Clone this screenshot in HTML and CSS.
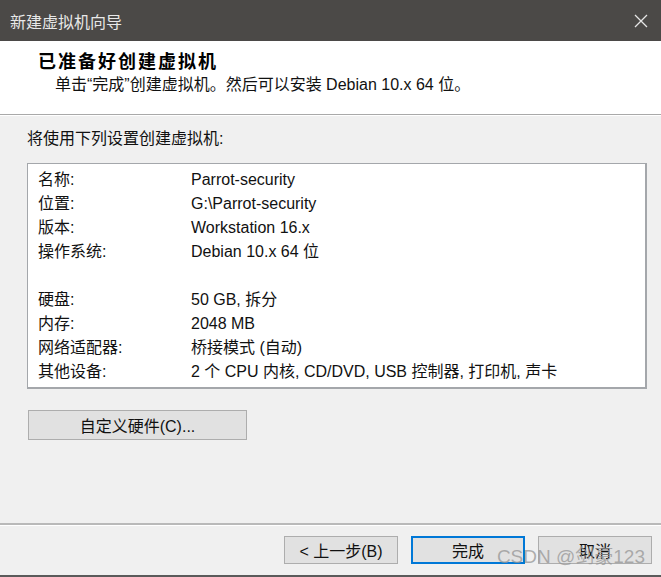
FILE: index.html
```html
<!DOCTYPE html>
<html lang="zh-CN">
<head>
    <meta charset="UTF-8">
    <meta name="viewport" content="width=device-width, initial-scale=1.0">
    <title>新建虚拟机向导</title>
    <link rel="stylesheet" href="styles.css">
</head>
<body>
    <div class="window">
        <div class="titlebar">
            <span class="title">新建虚拟机向导</span>
            <svg class="close" width="14" height="14" viewBox="0 0 14 14">
                <path d="M1 1 L13 13 M13 1 L1 13" stroke="#e6e6e6" stroke-width="1.3" fill="none"/>
            </svg>
        </div>

        <div class="header">
            <div class="header-title">已准备好创建虚拟机</div>
            <div class="header-sub">单击“完成”创建虚拟机。然后可以安装 Debian 10.x 64 位。</div>
        </div>

        <div class="content">
            <div class="intro">将使用下列设置创建虚拟机:</div>
            <div class="summary">
                <div class="row"><span class="key">名称:</span><span class="val">Parrot-security</span></div>
                <div class="row"><span class="key">位置:</span><span class="val">G:\Parrot-security</span></div>
                <div class="row"><span class="key">版本:</span><span class="val">Workstation 16.x</span></div>
                <div class="row"><span class="key">操作系统:</span><span class="val">Debian 10.x 64 位</span></div>
                <div class="row"></div>
                <div class="row"><span class="key">硬盘:</span><span class="val">50 GB, 拆分</span></div>
                <div class="row"><span class="key">内存:</span><span class="val">2048 MB</span></div>
                <div class="row"><span class="key">网络适配器:</span><span class="val">桥接模式 (自动)</span></div>
                <div class="row"><span class="key">其他设备:</span><span class="val">2 个 CPU 内核, CD/DVD, USB 控制器, 打印机, 声卡</span></div>
            </div>
            <button class="btn btn-custom" type="button">自定义硬件(C)...</button>
        </div>

        <div class="footer">
            <button class="btn" type="button">&lt; 上一步(B)</button>
            <button class="btn btn-default" type="button">完成</button>
            <button class="btn" type="button">取消</button>
            <span class="watermark">CSDN @剑豪123</span>
        </div>
    </div>
</body>
</html>
```

FILE: styles.css
```css
body {
    margin: 0;
    font-family: "Liberation Sans", "Noto Sans CJK SC", sans-serif;
    font-size: 16px;
    color: #111;
}
.window {
    width: 661px;
    height: 577px;
    display: flex;
    flex-direction: column;
    background-color: #f0f0f0;
    position: relative;
}
.titlebar {
    height: 41px;
    flex-shrink: 0;
    background-color: #4b4947;
    color: #e8e8e8;
    display: flex;
    align-items: center;
    justify-content: space-between;
    padding: 0 13px 0 10px;
}
.title {
    font-size: 16px;
}
.header {
    height: 74px;
    flex-shrink: 0;
    background-color: #fff;
    border-bottom: 1px solid #a9a9a9;
    box-shadow: 0 1px 0 #fff;
    box-sizing: border-box;
    padding-top: 10px;
}
.header-title {
    font-size: 18px;
    font-weight: bold;
    letter-spacing: 2px;
    line-height: 22px;
    padding-left: 38px;
    color: #000;
}
.header-sub {
    line-height: 24px;
    padding-left: 55px;
}
.content {
    flex: 1;
    padding: 13px 14px 0 27px;
}
.intro {
    line-height: 22px;
    margin-bottom: 13px;
}
.summary {
    background-color: #fff;
    border: 1px solid #a4a7ab;
    border-right-width: 2px;
    border-bottom-width: 2px;
    padding: 3px 0 4px 10px;
}
.row {
    display: flex;
    height: 24px;
    line-height: 25px;
}
.key {
    width: 153px;
    flex-shrink: 0;
}
.btn {
    font-family: inherit;
    font-size: 16px;
    color: #111;
    background-color: #e1e1e1;
    border: 1px solid #adadad;
    width: 114px;
    height: 28px;
    padding: 0;
    cursor: pointer;
}
.btn-custom {
    width: 219px;
    height: 30px;
    margin: 21px 0 0 1px;
}
.btn-default {
    border: 2px solid #0078d7;
}
.footer {
    height: 54px;
    flex-shrink: 0;
    border-top: 2px solid #b9b9b9;
    border-bottom: 2px solid #5a5a5a;
    box-shadow: inset 0 1px 0 #fff;
    box-sizing: border-box;
    display: flex;
    justify-content: flex-end;
    align-items: flex-start;
    gap: 13px;
    padding: 11px 9px 0 0;
}
.watermark {
    position: absolute;
    right: 16px;
    bottom: 9px;
    font-size: 19px;
    color: rgba(150, 150, 150, 0.75);
    font-family: "Liberation Sans", "Noto Sans CJK SC", sans-serif;
    pointer-events: none;
}
```
